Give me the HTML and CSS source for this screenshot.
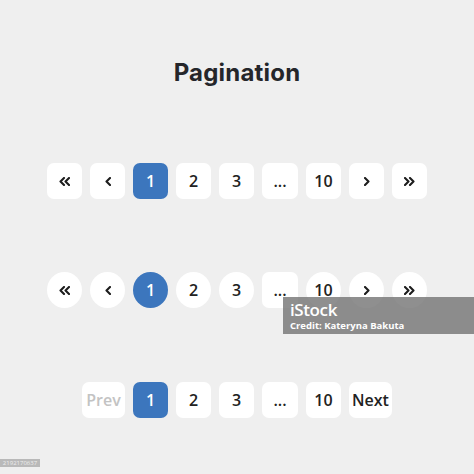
FILE: index.html
```html
<!DOCTYPE html>
<html lang="en">
<head>
  <meta charset="UTF-8" />
  <meta name="viewport" content="width=device-width, initial-scale=1.0"/>
  <title>Pagination</title>
  <link rel="stylesheet" href="styles.css">
</head>
<body>

  <main class="page">
    <h1 class="title">Pagination</h1>

    <!-- rounded squares -->
    <nav class="pager">
      <a class="page-btn" href="#"><svg width="11" height="9" viewBox="0 0 11 9"><polyline points="5,1 1.5,4.5 5,8"/><polyline points="10,1 6.5,4.5 10,8"/></svg></a>
      <a class="page-btn" href="#"><svg width="6" height="9" viewBox="0 0 6 9"><polyline points="5,1 1.5,4.5 5,8"/></svg></a>
      <a class="page-btn active" href="#">1</a>
      <a class="page-btn" href="#">2</a>
      <a class="page-btn" href="#">3</a>
      <span class="page-btn dots">...</span>
      <a class="page-btn" href="#">10</a>
      <a class="page-btn" href="#"><svg width="6" height="9" viewBox="0 0 6 9"><polyline points="1,1 4.5,4.5 1,8"/></svg></a>
      <a class="page-btn" href="#"><svg width="11" height="9" viewBox="0 0 11 9"><polyline points="1,1 4.5,4.5 1,8"/><polyline points="6,1 9.5,4.5 6,8"/></svg></a>
    </nav>

    <!-- circles -->
    <nav class="pager round">
      <a class="page-btn" href="#"><svg width="11" height="9" viewBox="0 0 11 9"><polyline points="5,1 1.5,4.5 5,8"/><polyline points="10,1 6.5,4.5 10,8"/></svg></a>
      <a class="page-btn" href="#"><svg width="6" height="9" viewBox="0 0 6 9"><polyline points="5,1 1.5,4.5 5,8"/></svg></a>
      <a class="page-btn active" href="#">1</a>
      <a class="page-btn" href="#">2</a>
      <a class="page-btn" href="#">3</a>
      <span class="page-btn dots">...</span>
      <a class="page-btn" href="#">10</a>
      <a class="page-btn" href="#"><svg width="6" height="9" viewBox="0 0 6 9"><polyline points="1,1 4.5,4.5 1,8"/></svg></a>
      <a class="page-btn" href="#"><svg width="11" height="9" viewBox="0 0 11 9"><polyline points="1,1 4.5,4.5 1,8"/><polyline points="6,1 9.5,4.5 6,8"/></svg></a>
    </nav>

    <!-- text prev / next -->
    <nav class="pager text">
      <span class="page-btn wide disabled">Prev</span>
      <a class="page-btn active" href="#">1</a>
      <a class="page-btn" href="#">2</a>
      <a class="page-btn" href="#">3</a>
      <span class="page-btn dots">...</span>
      <a class="page-btn" href="#">10</a>
      <a class="page-btn wide" href="#">Next</a>
    </nav>
  </main>

  <div class="watermark">
    <span class="wm-logo">iStock</span>
    <span class="wm-credit">Credit: Kateryna Bakuta</span>
  </div>

  <div class="stock-id">2192170637</div>

</body>
</html>
```

FILE: styles.css
```css
body {
  font-family: "Open Sans", Arial, sans-serif;
  background: #efefef;
  margin: 0;
  padding: 0;
  width: 474px;
  height: 474px;
  position: relative;
  overflow: hidden;
}

.page {
  padding-top: 60px;
  display: flex;
  flex-direction: column;
  align-items: center;
}

.title {
  margin: 0 0 77px;
  font-family: Inter, "Open Sans", sans-serif;
  font-size: 24px;
  line-height: 26px;
  font-weight: 700;
  letter-spacing: 0.2px;
  color: #25262a;
}

.pager {
  display: flex;
  gap: 8px;
}

.pager + .pager {
  margin-top: 73px;
}

.pager.text {
  margin-top: 74px;
}

.page-btn {
  width: 35px;
  height: 36px;
  display: flex;
  align-items: center;
  justify-content: center;
  background: #fff;
  border-radius: 7px;
  color: #222;
  font-size: 16px;
  font-weight: 600;
  text-decoration: none;
}

.page-btn svg {
  fill: none;
  stroke: #1d1d1d;
  stroke-width: 2.1;
  stroke-linecap: round;
  stroke-linejoin: round;
}

.page-btn.active {
  background: #3c76bd;
  color: #fff;
}

.page-btn.dots {
  width: 36px;
  align-items: flex-end;
  padding-bottom: 10px;
  box-sizing: border-box;
  line-height: 1;
}

.round .page-btn {
  border-radius: 50%;
}

.round .page-btn.dots {
  border-radius: 7px;
}

.page-btn.wide {
  width: 43px;
  font-size: 16px;
}

.page-btn.disabled {
  color: #c3c3c3;
}

.watermark {
  position: absolute;
  left: 283px;
  top: 297px;
  width: 191px;
  height: 37px;
  box-sizing: border-box;
  padding: 3px 0 0 7px;
  background: rgba(118, 118, 118, 0.82);
  color: #fff;
  display: flex;
  flex-direction: column;
}

.wm-logo {
  font-size: 17px;
  font-weight: 600;
  line-height: 19px;
  letter-spacing: -0.4px;
}

.wm-credit {
  font-size: 9.5px;
  font-weight: 700;
  line-height: 13px;
}

.stock-id {
  position: absolute;
  left: 0;
  top: 459px;
  width: 40px;
  height: 8px;
  background: #b9b9b9;
  color: #eee;
  font-size: 6px;
  line-height: 8px;
  text-align: center;
}
```
